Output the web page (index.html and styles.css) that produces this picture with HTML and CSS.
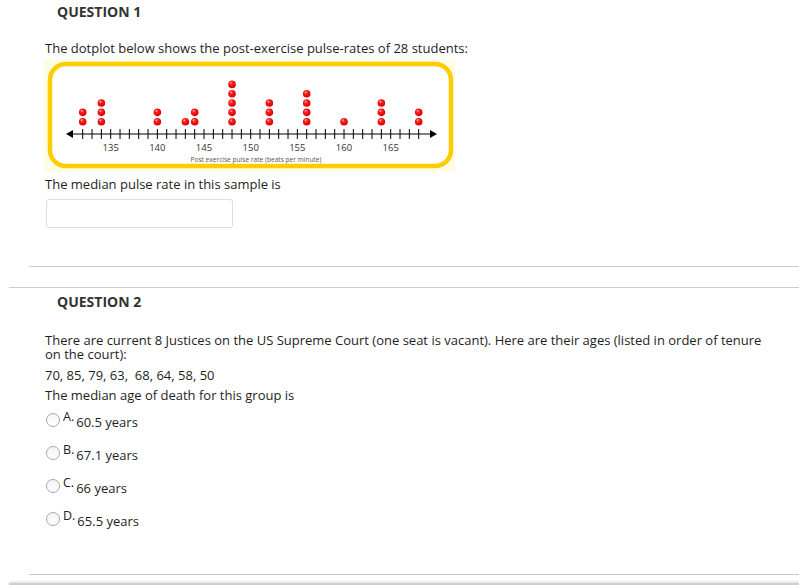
FILE: index.html
```html
<!DOCTYPE html>
<html>
<head>
<meta charset="utf-8">
<link rel="stylesheet" href="styles.css">
</head>
<body>
<div class="page">
  <section class="question q1">
    <h2 class="q-head">QUESTION 1</h2>
    <div class="q-body">
      <p class="line intro">The dotplot below shows the post-exercise pulse-rates of 28 students:</p>
      <div class="figure">
        <svg width="411" height="113" viewBox="0 0 411 113" xmlns="http://www.w3.org/2000/svg">
          <defs>
            <radialGradient id="ball" cx="0.38" cy="0.32" r="0.7">
              <stop offset="0" stop-color="#ffb0b0"/>
              <stop offset="0.3" stop-color="#ff2020"/>
              <stop offset="1" stop-color="#d00000"/>
            </radialGradient>
          </defs>
          <rect x="6" y="5" width="401" height="102" rx="16" ry="16" fill="#ffffff" stroke="#ffcc00" stroke-width="4.5"/>
          <g id="dots"></g>
          <line x1="27" y1="75" x2="389" y2="75" stroke="#000" stroke-width="1.2"/>
          <polygon points="22,75 29,71 29,79" fill="#000"/>
          <polygon points="393,75 386,71 386,79" fill="#000"/>
          <g id="ticks" stroke="#000" stroke-width="1"></g>
          <g class="labels" font-size="9.5" fill="#333" text-anchor="middle">
            <text x="66.7" y="92">135</text>
            <text x="113.3" y="92">140</text>
            <text x="160" y="92">145</text>
            <text x="206.7" y="92">150</text>
            <text x="253.3" y="92">155</text>
            <text x="300" y="92">160</text>
            <text x="346.7" y="92">165</text>
          </g>
          <text class="axis-title" x="212" y="102.5" font-size="6.6" fill="#555" text-anchor="middle">Post exercise pulse rate (beats per minute)</text>
        </svg>
      </div>
      <p class="line prompt">The median pulse rate in this sample is</p>
      <div class="answer-box"></div>
    </div>
  </section>
  <div class="rule rule-inner"></div>
  <div class="rule rule-outer"></div>
  <section class="question q2">
    <h2 class="q-head">QUESTION 2</h2>
    <div class="q-body">
      <p class="para">There are current 8 Justices on the US Supreme Court (one seat is vacant). Here are their ages (listed in order of tenure on the court):</p>
      <p class="para ages">70, 85, 79, 63,&nbsp; 68, 64, 58, 50</p>
      <p class="para ask">The median age of death for this group is</p>
      <ul class="options">
        <li class="option"><span class="radio"></span><span class="opt-letter">A.</span><span class="opt-text">60.5 years</span></li>
        <li class="option"><span class="radio"></span><span class="opt-letter">B.</span><span class="opt-text">67.1 years</span></li>
        <li class="option"><span class="radio"></span><span class="opt-letter">C.</span><span class="opt-text">66 years</span></li>
        <li class="option"><span class="radio"></span><span class="opt-letter">D.</span><span class="opt-text">65.5 years</span></li>
      </ul>
    </div>
  </section>
  <div class="rule rule-inner bottom"></div>
  <div class="shadow-bar"></div>
</div>
<script>
(function(){
  var ns = "http://www.w3.org/2000/svg";
  function x(v){ return 66.7 + (v-135)*9.333; }
  var ticks = document.getElementById("ticks");
  for (var v=132; v<=168; v++){
    var l = document.createElementNS(ns,"line");
    l.setAttribute("x1", x(v)); l.setAttribute("x2", x(v));
    l.setAttribute("y1", 70); l.setAttribute("y2", 80);
    ticks.appendChild(l);
  }
  var data = [[132,2],[134,3],[140,2],[143,1],[144,2],[148,5],[152,3],[156,4],[160,1],[164,3],[168,2]];
  var dots = document.getElementById("dots");
  data.forEach(function(d){
    for (var k=0;k<d[1];k++){
      var c = document.createElementNS(ns,"circle");
      c.setAttribute("cx", x(d[0]));
      c.setAttribute("cy", 62.7 - k*9.33);
      c.setAttribute("r", 3.8);
      c.setAttribute("fill", "url(#ball)");
      dots.appendChild(c);
    }
  });
})();
</script>
</body>
</html>
```

FILE: styles.css
```css
html, body {
  margin: 0;
  padding: 0;
  background: #ffffff;
}
body {
  font-family: "Open Sans", "Noto Sans", sans-serif;
  color: #1e1e1e;
  width: 799px;
  height: 585px;
  overflow: hidden;
}
.page {
  display: flex;
  flex-direction: column;
}
.q-head {
  margin: 0;
  padding-left: 57px;
  font-size: 14px;
  line-height: 20px;
  font-weight: 700;
  color: #333;
}
.q1 .q-head {
  margin-top: 2px;
}
.q-body {
  padding-left: 45px;
}
.line {
  margin: 0;
  font-size: 13px;
  line-height: 18px;
}
.intro {
  margin-top: 17px;
}
.figure {
  margin-top: 2px;
  margin-left: -1px;
  width: 411px;
  height: 113px;
  background: #fdfde2;
}
.figure svg {
  display: block;
}
.figure text {
  font-family: "Open Sans", "Noto Sans", sans-serif;
}
.prompt {
  margin-top: 3px;
}
.answer-box {
  margin-top: 6px;
  margin-left: 1px;
  width: 185px;
  height: 27px;
  border: 1px solid #dcdcdc;
  border-radius: 3px;
}
.rule {
  height: 1px;
  background: #cccccc;
}
.rule-inner {
  margin-left: 29px;
  margin-top: 38px;
}
.rule-outer {
  margin-left: 9px;
  margin-top: 20px;
}
.q2 .q-head {
  margin-top: 4px;
}
.para {
  margin: 0;
  font-size: 13px;
  line-height: 13.5px;
  padding-right: 34px;
}
.q2 .para:first-child {
  margin-top: 22px;
}
.ages {
  margin-top: 8px;
}
.ask {
  margin-top: 6px;
}
.options {
  list-style: none;
  margin: 9px 0 0 0;
  padding: 0;
  display: flex;
  flex-direction: column;
  gap: 13px;
}
.option {
  display: flex;
  align-items: center;
  height: 20px;
  font-size: 13px;
}
.radio {
  width: 12px;
  height: 12px;
  border: 1px solid #a8a8a8;
  border-radius: 50%;
  background: linear-gradient(#f4f4f4, #ffffff);
  margin-left: 1px;
  margin-top: -2px;
  box-sizing: content-box;
}
.opt-letter {
  font-size: 12.5px;
  margin-left: 3px;
  position: relative;
  top: -5px;
  color: #222;
}
.opt-text {
  margin-left: 2px;
  position: relative;
  top: 1px;
}
.rule-inner.bottom {
  margin-top: 44px;
}
.shadow-bar {
  margin-left: 9px;
  margin-top: 8px;
  height: 3px;
  background: #d0d0d0;
  box-shadow: 0 -1px 3px rgba(0,0,0,0.15);
}
```
